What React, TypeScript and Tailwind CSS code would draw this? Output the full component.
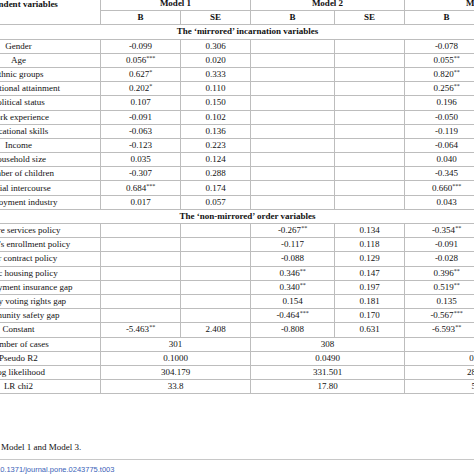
import React from "react";

type Row = { label: string; v: string[] };

const mirrored: Row[] = [
  { label: "Gender", v: ["-0.099", "0.306", "", "", "-0.078", "0.311"] },
  { label: "Age", v: ["0.056***", "0.020", "", "", "0.055**", "0.021"] },
  { label: "Ethnic groups", v: ["0.627*", "0.333", "", "", "0.820**", "0.356"] },
  { label: "Educational attainment", v: ["0.202*", "0.110", "", "", "0.256**", "0.118"] },
  { label: "Political status", v: ["0.107", "0.150", "", "", "0.196", "0.161"] },
  { label: "Work experience", v: ["-0.091", "0.102", "", "", "-0.050", "0.109"] },
  { label: "Vocational skills", v: ["-0.063", "0.136", "", "", "-0.119", "0.145"] },
  { label: "Income", v: ["-0.123", "0.223", "", "", "-0.064", "0.236"] },
  { label: "Household size", v: ["0.035", "0.124", "", "", "0.040", "0.131"] },
  { label: "Number of children", v: ["-0.307", "0.288", "", "", "-0.345", "0.306"] },
  { label: "Social intercourse", v: ["0.684***", "0.174", "", "", "0.660***", "0.184"] },
  { label: "Employment industry", v: ["0.017", "0.057", "", "", "0.043", "0.062"] },
];

const nonMirrored: Row[] = [
  { label: "Welfare services policy", v: ["", "", "-0.267**", "0.134", "-0.354**", "0.144"] },
  { label: "Children\u2019s enrollment policy", v: ["", "", "-0.117", "0.118", "-0.091", "0.126"] },
  { label: "Labor contract policy", v: ["", "", "-0.088", "0.129", "-0.028", "0.139"] },
  { label: "Public housing policy", v: ["", "", "0.346**", "0.147", "0.396**", "0.158"] },
  { label: "Unemployment insurance gap", v: ["", "", "0.340**", "0.197", "0.519**", "0.212"] },
  { label: "Minority voting rights gap", v: ["", "", "0.154", "0.181", "0.135", "0.193"] },
  { label: "Community safety gap", v: ["", "", "-0.464***", "0.170", "-0.567***", "0.183"] },
  { label: "Constant", v: ["-5.463**", "2.408", "-0.808", "0.631", "-6.593**", "2.612"] },
];

const summary: { label: string; v: string[] }[] = [
  { label: "Number of cases", v: ["301", "308", "301"] },
  { label: "Pseudo R2", v: ["0.1000", "0.0490", "0.1258"] },
  { label: "Log likelihood", v: ["304.179", "331.501", "283.145"] },
  { label: "LR chi2", v: ["33.8", "17.80", "51.85"] },
];

const cell = "border border-[#bdbdbd] h-[14.2px] p-0 text-center align-middle leading-none";

function Val({ s }: { s: string }) {
  const m = s.match(/^([^*]*)(\**)$/);
  const num = m ? m[1] : s;
  const stars = m ? m[2] : "";
  return (
    <>
      {num}
      {stars && <sup className="text-[6px]">{stars}</sup>}
    </>
  );
}

function DataRow({ r }: { r: Row }) {
  return (
    <tr>
      <td className={cell}>{r.label}</td>
      {r.v.map((x, i) => (
        <td key={i} className={cell}>
          <Val s={x} />
        </td>
      ))}
    </tr>
  );
}

export default function App() {
  return (
    <div className="w-[474px] h-[474px] overflow-hidden bg-white text-[#111111] font-['Liberation_Serif',serif] text-[9px]">
      <div className="-ml-[64px] -mt-[4px] w-[622px]">
        <table className="w-[622px] table-fixed border-collapse">
          <colgroup>
            <col className="w-[164px]" />
            <col className="w-[80px]" />
            <col className="w-[70px]" />
            <col className="w-[84px]" />
            <col className="w-[70px]" />
            <col className="w-[84px]" />
            <col className="w-[70px]" />
          </colgroup>
          <tbody>
            <tr>
              <td rowSpan={2} className="border border-[#bdbdbd] p-0 pt-[3px] text-center align-top leading-none font-bold">
                Dependent variables
              </td>
              <td colSpan={2} className={cell + " font-bold"}>Model 1</td>
              <td colSpan={2} className={cell + " font-bold"}>Model 2</td>
              <td colSpan={2} className={cell + " font-bold"}>Model 3</td>
            </tr>
            <tr>
              <td className={cell + " font-bold"}>B</td>
              <td className={cell + " font-bold"}>SE</td>
              <td className={cell + " font-bold"}>B</td>
              <td className={cell + " font-bold"}>SE</td>
              <td className={cell + " font-bold"}>B</td>
              <td className={cell + " font-bold"}>SE</td>
            </tr>
            <tr>
              <td colSpan={7} className={cell + " font-bold"}>
                The &lsquo;mirrored&rsquo; incarnation variables
              </td>
            </tr>
            {mirrored.map((r) => (
              <DataRow key={r.label} r={r} />
            ))}
            <tr>
              <td colSpan={7} className={cell + " font-bold"}>
                The &lsquo;non-mirrored&rsquo; order variables
              </td>
            </tr>
            {nonMirrored.map((r) => (
              <DataRow key={r.label} r={r} />
            ))}
            {summary.map((r) => (
              <tr key={r.label}>
                <td className={cell}>{r.label}</td>
                {r.v.map((x, i) => (
                  <td key={i} colSpan={2} className={cell}>
                    {x}
                  </td>
                ))}
              </tr>
            ))}
          </tbody>
        </table>
      </div>
      <div className="mt-[48px] pl-[1px] leading-[11px]">Model 1 and Model 3.</div>
      <div className="mt-[6px] border-t border-[#c8c8c8]" />
      <div className="-ml-[4px] mt-[5px] font-['Liberation_Sans',sans-serif] text-[7.5px] leading-[9px] text-[#3a62b8] whitespace-nowrap">
        10.1371/journal.pone.0243775.t003
      </div>
    </div>
  );
}
